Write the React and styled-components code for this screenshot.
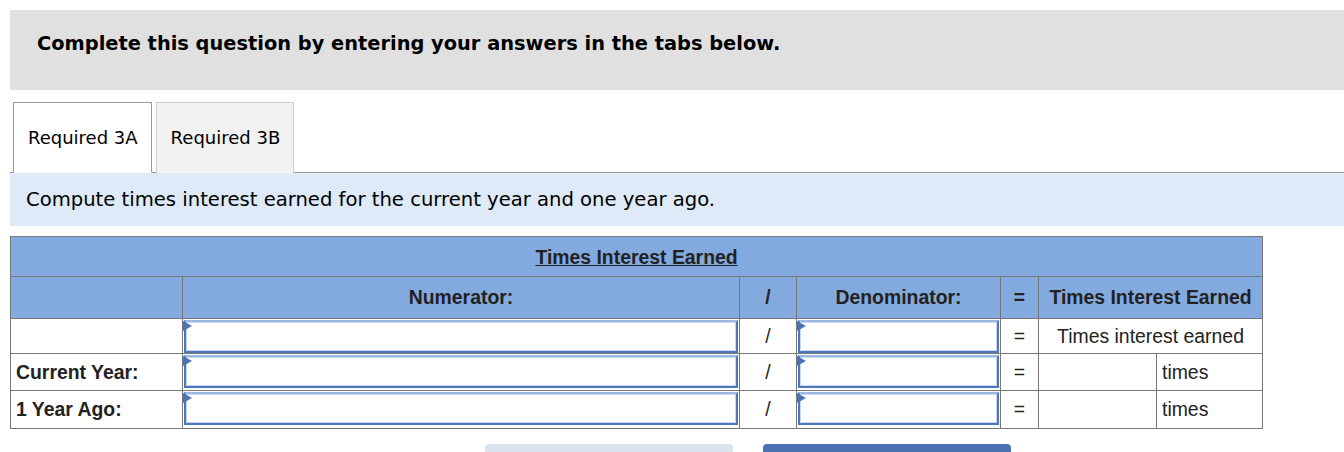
import React from "react";
import styled, { createGlobalStyle } from "styled-components";

const rows = [
  { label: "", result: "Times interest earned" },
  { label: "Current Year:", result: "times", height: 37 },
  { label: "1 Year Ago:", result: "times", height: 38 },
];

export default function App() {
  return (
    <>
      <GlobalStyle />
      <Page>
        <Banner>Complete this question by entering your answers in the tabs below.</Banner>

        <TabBar>
          <Tab $active>Required 3A</Tab>
          <Tab>Required 3B</Tab>
        </TabBar>

        <Instruction>
          Compute times interest earned for the current year and one year ago.
        </Instruction>

        <Grid>
          <colgroup>
            <col style={{ width: 172 }} />
            <col style={{ width: 557 }} />
            <col style={{ width: 57 }} />
            <col style={{ width: 204 }} />
            <col style={{ width: 38 }} />
            <col style={{ width: 118 }} />
            <col style={{ width: 106 }} />
          </colgroup>
          <tbody>
            <TitleRow>
              <th colSpan={7}>
                <u>Times Interest Earned</u>
              </th>
            </TitleRow>
            <HeadRow>
              <th />
              <th>Numerator:</th>
              <th>/</th>
              <th>Denominator:</th>
              <th>=</th>
              <th colSpan={2}>Times Interest Earned</th>
            </HeadRow>
            {rows.map((r, i) => (
              <BodyRow key={i} $h={r.height || 35}>
                <Label>{r.label}</Label>
                <InputCell>
                  <Marker />
                  <Field />
                </InputCell>
                <Op>/</Op>
                <InputCell>
                  <Marker />
                  <Field />
                </InputCell>
                <Op>=</Op>
                {i === 0 ? (
                  <Result colSpan={2}>{r.result}</Result>
                ) : (
                  <>
                    <Result />
                    <Unit>{r.result}</Unit>
                  </>
                )}
              </BodyRow>
            ))}
          </tbody>
        </Grid>

        <Buttons>
          <NavButton $light />
          <NavButton />
        </Buttons>
      </Page>
    </>
  );
}

const GlobalStyle = createGlobalStyle`
  body {
    margin: 0;
    background: #fff;
    font-family: "DejaVu Sans", Verdana, sans-serif;
    color: #000;
  }
`;

const Page = styled.div`
  padding: 10px 0 0 10px;
  height: 442px;
  overflow: hidden;
`;

const Banner = styled.div`
  background: #e0e0e0;
  height: 80px;
  box-sizing: border-box;
  padding: 23px 27px 0;
  font-size: 19.4px;
  font-weight: bold;
  line-height: 22px;
`;

const TabBar = styled.div`
  display: flex;
  gap: 4px;
  margin-top: 12px;
  padding-left: 3px;
  border-bottom: 1px solid #999;
`;

const Tab = styled.div`
  height: 71px;
  box-sizing: border-box;
  display: flex;
  align-items: center;
  padding: 0 13px 1px 14px;
  font-size: 18px;
  margin-bottom: -1px;
  background: ${(p) => (p.$active ? "#fff" : "#f2f2f2")};
  border: 1px solid ${(p) => (p.$active ? "#999" : "#ccc")};
  border-bottom: ${(p) => (p.$active ? "1px solid #fff" : "none")};
`;

const Instruction = styled.div`
  background: #deeaf7;
  height: 53px;
  box-sizing: border-box;
  display: flex;
  align-items: center;
  padding-left: 16px;
  font-size: 19.6px;
`;

const Grid = styled.table`
  margin-top: 10px;
  width: 1252px;
  table-layout: fixed;
  border-collapse: collapse;
  font-family: "Liberation Sans", Arial, sans-serif;
  font-size: 19.4px;
  color: #222;

  td,
  th {
    border: 1px solid #777;
    padding: 0;
  }
`;

const TitleRow = styled.tr`
  height: 40px;
  background: #83aadf;
  th {
    font-weight: bold;
    text-align: center;
    padding-top: 2px;
  }
`;

const HeadRow = styled.tr`
  height: 42px;
  background: #83aadf;
  th {
    font-weight: bold;
    text-align: center;
  }
`;

const BodyRow = styled.tr`
  height: ${(p) => p.$h}px;
  background: #fff;
`;

const Label = styled.td`
  font-weight: bold;
  padding-left: 5px !important;
`;

const InputCell = styled.td`
  position: relative;
  vertical-align: top;
`;

const Field = styled.div`
  box-sizing: border-box;
  height: 100%;
  min-height: 33px;
  margin: 1px 1px 0 1px;
  border: 2px solid #4e77b7;
  border-top-color: #9db8e3;
  box-shadow: inset 0 0 0 1px #c7d7f0;
  background: #fff;
`;

const Marker = styled.span`
  position: absolute;
  z-index: 1;
  left: 0;
  top: 2px;
  width: 0;
  height: 0;
  border-top: 5px solid transparent;
  border-bottom: 5px solid transparent;
  border-left: 9px solid #4a72b4;
`;

const Op = styled.td`
  text-align: center;
`;

const Result = styled.td`
  text-align: center;
`;

const Unit = styled.td`
  text-align: left;
  padding-left: 5px !important;
`;

const Buttons = styled.div`
  display: flex;
  gap: 30px;
  margin-top: 15px;
  padding-left: 475px;
`;

const NavButton = styled.div`
  width: 248px;
  height: 36px;
  border-radius: 4px;
  background: ${(p) => (p.$light ? "#dae3ee" : "#4a72b0")};
`;
